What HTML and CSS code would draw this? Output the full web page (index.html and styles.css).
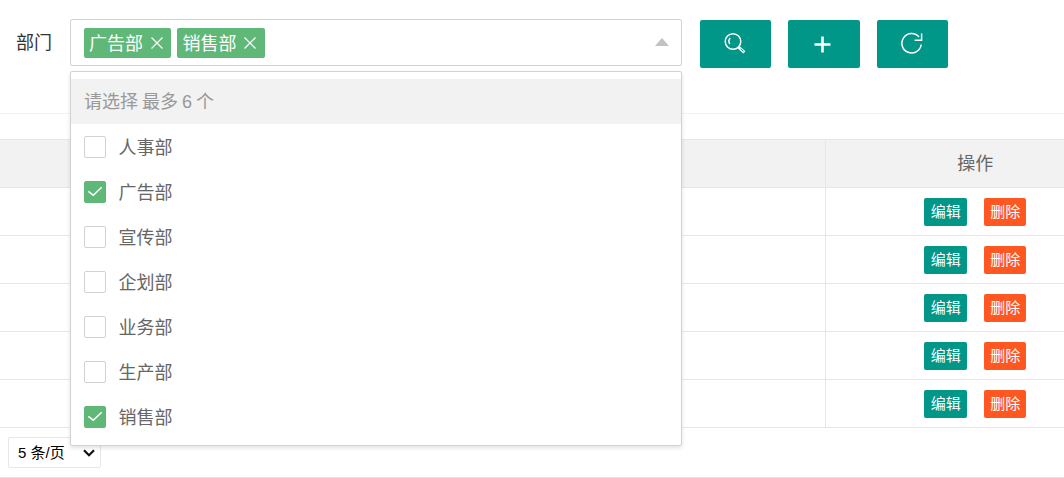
FILE: index.html
```html
<!DOCTYPE html>
<html lang="zh-CN">
<head>
<meta charset="utf-8">
<title>部门</title>
<link rel="stylesheet" href="styles.css">
</head>
<body>
<form class="toolbar">
  <label class="field-label">部门</label>
  <div class="multi-select">
    <span class="tag">广告部<svg class="tag-x" viewBox="0 0 14 14"><path d="M1.5 1.5l11 11M12.5 1.5l-11 11"/></svg></span>
    <span class="tag">销售部<svg class="tag-x" viewBox="0 0 14 14"><path d="M1.5 1.5l11 11M12.5 1.5l-11 11"/></svg></span>
    <span class="caret"></span>
  </div>
  <button type="button" class="icon-btn btn-search">
    <svg viewBox="0 0 24 24" width="24" height="24"><circle cx="9" cy="9.5" r="7.8"/><path d="M6.2 6a5 5 0 0 0-.4 6"/><path class="thick" d="M14.8 15.3l5.6 5"/><path class="hollow" d="M16.5 16.8l3 2.6"/></svg>
  </button>
  <button type="button" class="icon-btn btn-add">
    <svg viewBox="0 0 24 24" width="24" height="24"><path class="plus" d="M10.5 4.5v16M2.5 12.5h16"/></svg>
  </button>
  <button type="button" class="icon-btn btn-refresh">
    <svg viewBox="0 0 24 24" width="24" height="24"><path d="M18 5A9.7 9.7 0 1 0 20.2 12.5"/><path d="M20.6 1.5v6.8h-7"/></svg>
  </button>
</form>
<div class="rule"></div>
<table class="grid">
  <thead><tr><th></th><th class="ops">操作</th></tr></thead>
  <tbody>
    <tr><td></td><td class="ops"><span class="mini edit">编辑</span><span class="mini del">删除</span></td></tr>
    <tr><td></td><td class="ops"><span class="mini edit">编辑</span><span class="mini del">删除</span></td></tr>
    <tr><td></td><td class="ops"><span class="mini edit">编辑</span><span class="mini del">删除</span></td></tr>
    <tr><td></td><td class="ops"><span class="mini edit">编辑</span><span class="mini del">删除</span></td></tr>
    <tr><td></td><td class="ops"><span class="mini edit">编辑</span><span class="mini del">删除</span></td></tr>
  </tbody>
</table>
<div class="pager">
  <div class="select-wrap">
    <select class="page-size"><option>5 条/页</option><option>10 条/页</option></select>
    <svg class="chevron" viewBox="0 0 12 8"><path d="M1 1.2l5 5 5-5"/></svg>
  </div>
</div>
<div class="dropdown">
  <div class="tip">请选择 最多 6 个</div>
  <div class="option"><span class="box"></span><span class="opt-text">人事部</span></div>
  <div class="option"><span class="box on"><svg viewBox="0 0 20 20"><path d="M3.3 9.3l5 3.9 8.4-7.9"/></svg></span><span class="opt-text">广告部</span></div>
  <div class="option"><span class="box"></span><span class="opt-text">宣传部</span></div>
  <div class="option"><span class="box"></span><span class="opt-text">企划部</span></div>
  <div class="option"><span class="box"></span><span class="opt-text">业务部</span></div>
  <div class="option"><span class="box"></span><span class="opt-text">生产部</span></div>
  <div class="option"><span class="box on"><svg viewBox="0 0 20 20"><path d="M3.3 9.3l5 3.9 8.4-7.9"/></svg></span><span class="opt-text">销售部</span></div>
</div>
</body>
</html>
```
FILE: styles.css
```css
* { box-sizing: border-box; }
html, body { margin: 0; padding: 0; height: 478px; overflow: hidden; background: #fff; }
body {
  position: relative;
  font-family: "Liberation Sans", "Noto Sans CJK SC", sans-serif;
  font-size: 14px;
  color: #666;
}
.toolbar { display: flex; align-items: flex-start; height: 113px; padding: 19px 0 0 16px; }
.field-label { width: 54px; height: 47px; line-height: 48px; font-size: 18px; color: #333; }
.multi-select {
  display: flex; align-items: center; gap: 6px;
  position: relative;
  width: 612px; height: 47px; padding: 1px 0 0 13px;
  border: 1px solid #d2d2d2; border-radius: 2px; background: #fff;
}
.tag {
  display: flex; align-items: center;
  height: 30px; padding: 2px 7.4px 0 5px;
  background: #5fb878; border-radius: 2px;
  color: #fff; font-size: 18px; line-height: 28px;
}
.tag-x { width: 14px; height: 14px; margin: 0 0 2px 7px; fill: none; stroke: #fff; stroke-width: 1.2; }
.caret {
  position: absolute; right: 12px; top: 18px;
  border: 7.5px solid transparent; border-top: 0; border-bottom: 8px solid #c2c2c2;
}
.icon-btn {
  display: flex; align-items: center; justify-content: center;
  height: 48px; margin-top: 1px; padding: 0;
  border: 0; border-radius: 2px; background: #009688;
}
.icon-btn svg { fill: none; stroke: #fff; stroke-width: 1.5; }
.icon-btn .thick { stroke-width: 3; }
.icon-btn .hollow { stroke: #009688; stroke-width: 1; }
.icon-btn .plus { stroke-width: 2.6; }
.btn-search { width: 71px; margin-left: 18px; }
.btn-add { width: 72px; margin-left: 17px; }
.btn-refresh { width: 71px; margin-left: 17px; }
.rule { height: 1px; background: #f2f2f2; margin-bottom: 25px; }
.grid { width: 100%; border-collapse: collapse; table-layout: fixed; }
.grid th, .grid td { border: 1px solid #e6e6e6; padding: 0; }
.grid tr > :first-child { border-left: 0; }
.grid tr > :last-child { border-right: 0; width: 239px; }
.grid th { height: 48px; padding-bottom: 3px; background: #f2f2f2; font-weight: 400; font-size: 18px; color: #666; }
.grid td { height: 48px; }
.grid .ops { padding-left: 61px; text-align: center; }
.mini {
  display: inline-block; height: 28px; line-height: 28px; padding: 0 6.4px;
  border-radius: 2px; color: #fff; font-size: 15px; vertical-align: middle;
}
.edit { background: #009688; }
.del { background: #ff5722; margin-left: 17px; padding: 0 6px; }
.pager { height: 50px; padding-top: 9px; border-bottom: 1px solid #e6e6e6; }
.select-wrap { position: relative; width: 93px; height: 31px; margin-left: 8px; }
.page-size {
  appearance: none;
  display: block; width: 93px; height: 31px; padding: 0 0 0 9px;
  border: 1px solid #e6e6e6; border-radius: 2px; background: #fff;
  color: #000; font-family: inherit; font-size: 15px;
}
.chevron { position: absolute; left: 75px; top: 12px; width: 12px; height: 8px; fill: none; stroke: #111; stroke-width: 2.2; pointer-events: none; }
.dropdown {
  position: absolute; left: 70px; top: 71px;
  width: 612px; height: 375px; padding-top: 7px;
  border: 1px solid #d2d2d2; border-radius: 2px; background: #fff;
  box-shadow: 0 2px 4px rgba(0,0,0,.12);
}
.tip { height: 45px; line-height: 46px; padding-left: 13px; background: #f2f2f2; color: #999; font-size: 18px; word-spacing: -1px; }
.option { display: flex; align-items: center; gap: 12.6px; height: 45px; padding-left: 13px; font-size: 18px; color: #666; }
.opt-text { margin-bottom: 2px; }
.box { display: block; width: 22px; height: 22px; border: 1px solid #d2d2d2; border-radius: 2px; background: #fff; }
.box.on { background: #5fb878; border-color: #5fb878; }
.box svg { display: block; width: 20px; height: 20px; fill: none; stroke: #fff; stroke-width: 1.5; }
```
